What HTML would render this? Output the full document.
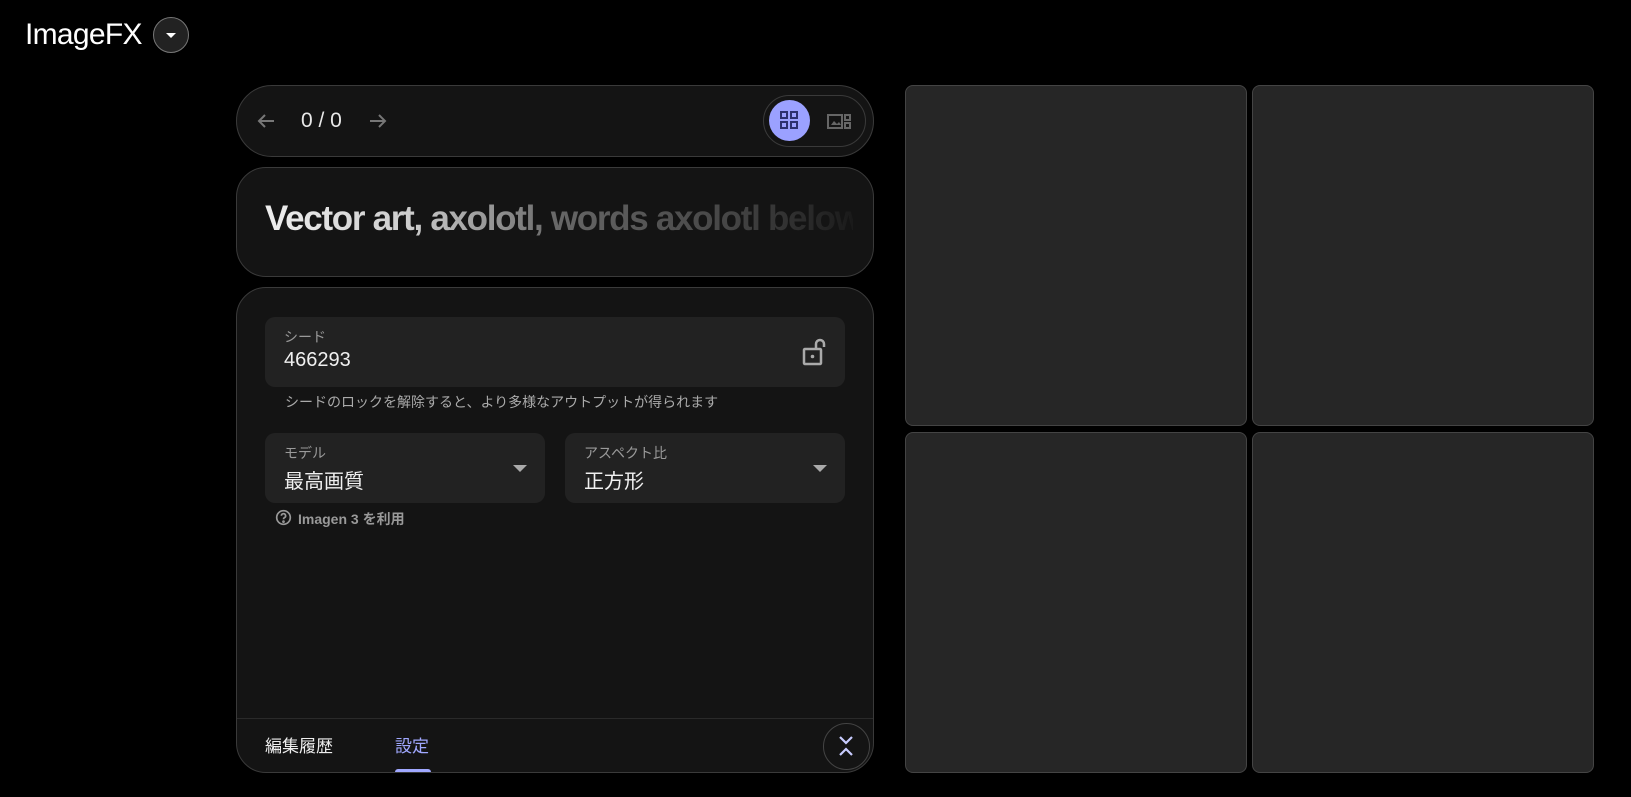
<!DOCTYPE html>
<html><head><meta charset="utf-8"><style>
*{box-sizing:border-box;margin:0;padding:0}
body{width:1631px;height:797px;background:#000;position:relative;overflow:hidden;font-family:"Liberation Sans","Noto Sans CJK JP",sans-serif;color:#e3e3e3}
.abs{position:absolute}
.card{position:absolute;background:#141414;border:1px solid #3a3a3a}
.tile{position:absolute;background:#262626;border:1px solid #444;border-radius:8px}
.field{position:absolute;background:#222;border-radius:10px}
.lbl{position:absolute;left:19px;top:10px;font-size:14px;color:#9a9a9a}
.val{position:absolute;left:19px;top:32px;font-size:20px;color:#f0f0f0}
.tri{position:absolute;width:0;height:0;border-left:7px solid transparent;border-right:7px solid transparent;border-top:7px solid #aaa}
</style></head><body>
<div class="abs" style="left:25px;top:18px;font-size:30px;color:#fff;letter-spacing:-0.7px">ImageFX</div>
<div class="abs" style="left:153px;top:17px;width:36px;height:36px;border-radius:50%;background:#222;border:1px solid #777"></div>
<div class="abs" style="left:166px;top:33px;border-left:5px solid transparent;border-right:5px solid transparent;border-top:5px solid #fff"></div>

<div class="card" style="left:236px;top:85px;width:638px;height:72px;border-radius:36px">
 <svg class="abs" style="left:17px;top:23px" width="24" height="24" viewBox="0 0 24 24"><path d="M20 12H5M11 6l-6 6 6 6" fill="none" stroke="#777" stroke-width="2"/></svg>
 <div class="abs" style="left:64px;top:23px;font-size:21px;color:#e8e8e8">0 / 0</div>
 <svg class="abs" style="left:129px;top:23px" width="24" height="24" viewBox="0 0 24 24"><path d="M4 12h15M13 6l6 6-6 6" fill="none" stroke="#777" stroke-width="2"/></svg>
 <div class="abs" style="left:526px;top:9px;width:103px;height:52px;border-radius:26px;border:1px solid #3a3a3a"></div>
 <div class="abs" style="left:532px;top:14px;width:41px;height:41px;border-radius:50%;background:#9ba1ff"></div>
 <svg class="abs" style="left:542px;top:24px" width="21" height="21" viewBox="0 0 21 21" fill="none" stroke="#2c3170" stroke-width="2"><rect x="2" y="2" width="6" height="6"/><rect x="12" y="2" width="6" height="6"/><rect x="2" y="12" width="6" height="6"/><rect x="12" y="12" width="6" height="6"/></svg>
 <svg class="abs" style="left:590px;top:27px" width="26" height="18" viewBox="0 0 26 18" fill="none" stroke="#666" stroke-width="2"><rect x="1" y="2" width="14" height="13"/><path d="M4 12l3-4 3 3 2-2 2 3z" fill="#666" stroke="none"/><rect x="18" y="2" width="5" height="5"/><rect x="18" y="10" width="5" height="5"/></svg>
</div>

<div class="card" style="left:236px;top:167px;width:638px;height:110px;border-radius:30px;overflow:hidden">
 <div class="abs" style="left:28px;top:31px;font-size:35px;font-weight:bold;letter-spacing:-1.3px;white-space:nowrap;background:linear-gradient(90deg,#eee 0%,#ccc 25%,#666 50%,#444 80%,#1a1a1a 100%);-webkit-background-clip:text;background-clip:text;color:transparent;width:588px;overflow:hidden">Vector art, axolotl, words axolotl below</div>
</div>

<div class="card" style="left:236px;top:287px;width:638px;height:486px;border-radius:30px;overflow:hidden">
 <div class="field" style="left:28px;top:29px;width:580px;height:70px">
  <div class="lbl">シード</div><div class="val">466293</div>
  <svg class="abs" style="left:536px;top:20px" width="26" height="30" viewBox="0 0 26 30" fill="none" stroke="#aaa" stroke-width="2.5"><rect x="3" y="12" width="17" height="15" rx="1"/><path d="M15 12V7a4 4 0 0 1 8 0v3"/><circle cx="11.5" cy="19.5" r="1.8" fill="#aaa" stroke="none"/></svg>
 </div>
 <div class="abs" style="left:48px;top:104px;font-size:14px;color:#aaa">シードのロックを解除すると、より多様なアウトプットが得られます</div>
 <div class="field" style="left:28px;top:145px;width:280px;height:70px">
  <div class="lbl">モデル</div><div class="val">最高画質</div><div class="tri" style="left:248px;top:32px"></div>
 </div>
 <div class="field" style="left:328px;top:145px;width:280px;height:70px">
  <div class="lbl">アスペクト比</div><div class="val">正方形</div><div class="tri" style="left:248px;top:32px"></div>
 </div>
 <svg class="abs" style="left:38px;top:221px" width="17" height="17" viewBox="0 0 20 20" fill="none" stroke="#999" stroke-width="2"><circle cx="10" cy="10" r="8"/><path d="M7.5 8a2.5 2.5 0 1 1 3.5 2.3c-.7.4-1 .8-1 1.7"/><circle cx="10" cy="14.8" r=".6" fill="#999"/></svg>
 <div class="abs" style="left:61px;top:221px;font-size:14px;color:#999;font-weight:bold">Imagen 3 を利用</div>
 <div class="abs" style="left:0;top:430px;width:638px;height:1px;background:#2a2a2a"></div>
 <div class="abs" style="left:28px;top:444px;font-size:17px;color:#eee">編集履歴</div>
 <div class="abs" style="left:158px;top:444px;font-size:17px;color:#a0a8ff">設定</div>
 <div class="abs" style="left:158px;top:481px;width:36px;height:6px;border-radius:3px;background:#a0a8ff"></div>
 <div class="abs" style="left:586px;top:435px;width:47px;height:47px;border-radius:50%;border:1px solid #444"></div>
 <svg class="abs" style="left:599px;top:446px" width="20" height="24" viewBox="0 0 20 24" fill="none" stroke="#c8ccff" stroke-width="2.2"><path d="M4 3l6 6 6-6M4 21l6-6 6 6"/></svg>
</div>

<div class="tile" style="left:905px;top:85px;width:342px;height:341px"></div>
<div class="tile" style="left:1252px;top:85px;width:342px;height:341px"></div>
<div class="tile" style="left:905px;top:432px;width:342px;height:341px"></div>
<div class="tile" style="left:1252px;top:432px;width:342px;height:341px"></div>
</body></html>
